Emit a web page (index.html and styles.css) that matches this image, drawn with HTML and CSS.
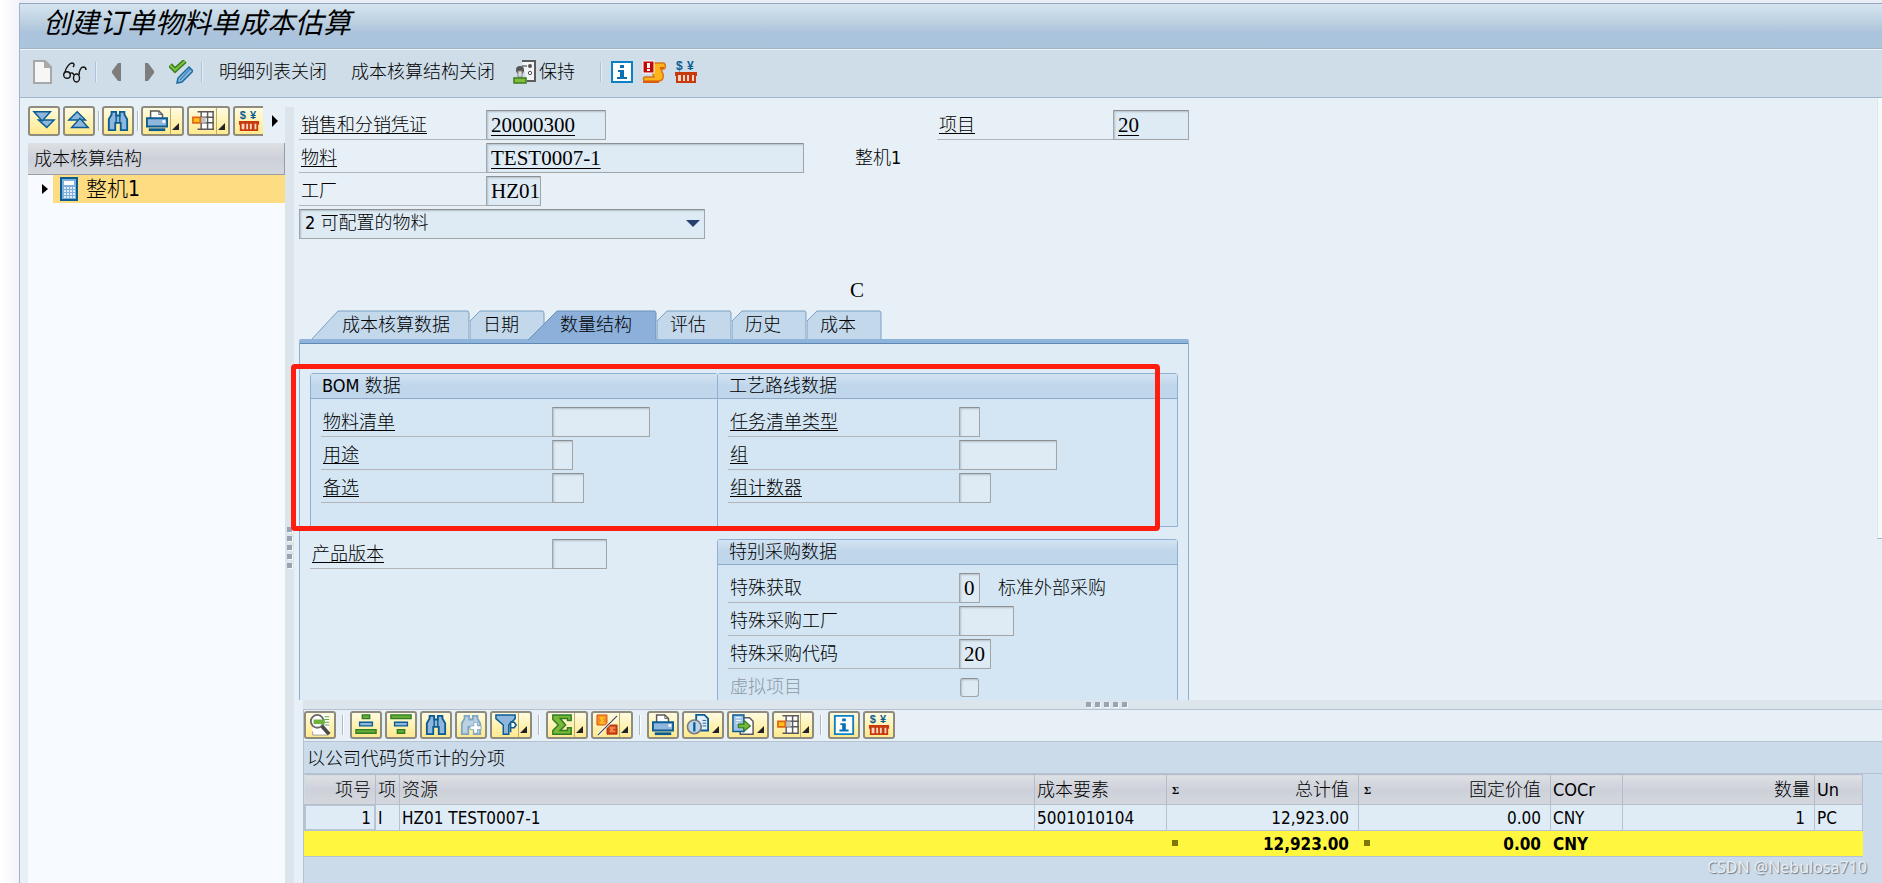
FILE: index.html
```html
<!DOCTYPE html>
<html lang="zh-CN">
<head>
    <meta charset="UTF-8">
    <meta name="viewport" content="width=device-width, initial-scale=1.0">
    <title>创建订单物料单成本估算</title>
    <link rel="stylesheet" href="styles.css">
</head>
<body>
<!-- 图标 -->
<svg class="icon-defs" aria-hidden="true">
    <symbol id="i-doc" viewBox="0 0 24 24"><path d="M3 1h11l6 6v16H3z" fill="#f6f6f6" stroke="#a8a8a8" stroke-width="2"/><path d="M13 1l7 7h-7z" fill="#a8a8a8"/></symbol>
    <symbol id="i-glasses" viewBox="0 0 24 24"><g fill="none" stroke="#111" stroke-width="1.4"><circle cx="4" cy="15" r="3.3"/><ellipse cx="13.500" cy="18" rx="3" ry="4"/><path d="M7 14c1-2 3-1 4 1M2 12C3 7 7 3 9 3s3 2 1 4M16 15c0-4 2-8 4-8s3 1 3 3"/></g></symbol>
    <symbol id="i-prev" viewBox="0 0 24 24"><path d="M16 3v18h-3L7 13v-2l6-8z" fill="#7d7d7d"/></symbol>
    <symbol id="i-next" viewBox="0 0 24 24"><path d="M8 3v18h3l6-8v-2l-6-8z" fill="#7d7d7d"/></symbol>
    <symbol id="i-check" viewBox="0 0 24 24"><path d="M1 5l5 5 10-9" fill="none" stroke="#3c7d1f" stroke-width="5"/><path d="M1 5l5 5 10-9" fill="none" stroke="#7cc043" stroke-width="2"/><path d="M8 23l1-5L20 7l4 4-11 11z" fill="#86b6df" stroke="#1d6a9c" stroke-width="1.500"/><path d="M11 20L21 9" stroke="#1d6a9c"/></symbol>
    <symbol id="i-hold" viewBox="0 0 24 24"><path d="M9 1h13v20h-8" fill="#f4f4f6" stroke="#5c5c5c" stroke-width="2"/><path d="M9 6h5" stroke="#333"/><circle cx="17" cy="6" r="2" fill="#555"/><circle cx="17" cy="13" r="1.700" fill="none" stroke="#555"/><circle cx="7" cy="10" r="4" fill="#555"/><path d="M5 11h4v6H5z" fill="#ddd" stroke="#888"/><path d="M1 18h12v5H1z" fill="#83bd3c" stroke="#3d7d1f" stroke-width="1.500"/></symbol>
    <symbol id="i-info" viewBox="0 0 24 24"><path d="M2 2h20v20H2z" fill="#fff" stroke="#0b80c3" stroke-width="2"/><path d="M10 5h4v3h-4zM8 10h6v7h3v2H7v-2h3v-5H8z" fill="#0b70b3"/></symbol>
    <symbol id="i-scroll" viewBox="0 0 24 24"><path d="M8 3h13c3 0 3 5 1 6h-3l2 5c1 4-1 7-4 7H3c-2 0-2-4 0-4h9L9 9z" fill="#fbb41a" stroke="#d9741a" stroke-width="1.500"/><path d="M1 22h16M18 8h4" stroke="#e05a10" stroke-width="2"/><path d="M1 1h11v12H1z" fill="#c40808" stroke="#fff"/><path d="M5 3h3v5H5zM5 9h3v2H5z" fill="#fff"/></symbol>
    <symbol id="i-down" viewBox="0 0 24 24"><g fill="#8fb6dc" stroke="#0a5c92" stroke-width="1.600"><path d="M6 11h17l-8 8z"/><path d="M1 2h18l-9 10z"/></g></symbol>
    <symbol id="i-up" viewBox="0 0 24 24"><g fill="#8fb6dc" stroke="#0a5c92" stroke-width="1.600"><path d="M1 11h18L10 2z"/><path d="M4 19h18l-9-10z"/></g></symbol>
    <symbol id="i-find" viewBox="0 0 24 24"><path d="M2 22V10l3-5V2h5v4h4V2h5v3l3 5v12h-7v-8h-6v8z" fill="#8fb6dc" stroke="#0a5c92" stroke-width="2"/><path d="M10 6v8M14 6v8" stroke="#0a5c92" stroke-width="1.500"/></symbol>
    <symbol id="i-print" viewBox="0 0 24 24"><path d="M5 10V1h9l4 4v5" fill="#fff" stroke="#5a5a5a" stroke-width="1.600"/><path d="M14 1v4h4" fill="none" stroke="#5a5a5a"/><path d="M1 9h22v9H1z" fill="#8fb6dc" stroke="#0a5c92" stroke-width="2"/><path d="M18 11h3v3h-3z" fill="#fff"/><path d="M3 20h18v3H3z" fill="#0a5c92"/></symbol>
    <symbol id="i-layout" viewBox="0 0 24 24"><path d="M9 2h14v19H9z" fill="#fff"/><path d="M6 2h18M9 8h15M9 14h15M6 21h18M10 2v19M17 2v19M23 2v19" fill="none" stroke="#5a5a5a" stroke-width="1.600"/><path d="M1 8h8v6H1z" fill="#fbc21a" stroke="#e0641a" stroke-width="1.800"/><path d="M10 8h5v6h-5z" fill="#c4c4c4"/></symbol>
    <symbol id="i-calc" viewBox="0 0 24 24"><path d="M4 1h16v22H4z" fill="#7fb0dc" stroke="#0a5c92" stroke-width="2"/><path d="M7 4h10v4H7z" fill="#fff"/><path d="M7 11h11M7 14h11M7 17h11M7 20h11" stroke="#fff" stroke-width="1.500" stroke-dasharray="2 1"/></symbol>
    <symbol id="i-detail" viewBox="0 0 24 24"><path d="M4 1h18v22H4z" fill="#fff"/><path d="M17 3h5M17 6h5M17 9h5M17 12h5" stroke="#4fa02d"/><path d="M4 19v4h16" stroke="#999" fill="none"/><circle cx="9" cy="8" r="7" fill="#fff" stroke="#6a6a6a" stroke-width="2"/><path d="M5 6h12v5H5z" fill="#6cb33c"/><path d="M14 13l8 9" stroke="#4a4a4a" stroke-width="4"/></symbol>
    <symbol id="i-asc" viewBox="0 0 24 24"><g stroke-width="1.500"><path d="M8 1h8v4H8z" fill="#65ad33" stroke="#2f7d2a"/><path d="M5 9h14v4H5z" fill="#8fb6dc" stroke="#0a5c92"/><path d="M1 17h22v4H1z" fill="#65ad33" stroke="#2f7d2a"/></g></symbol>
    <symbol id="i-desc" viewBox="0 0 24 24"><g stroke-width="1.500"><path d="M1 1h22v4H1z" fill="#65ad33" stroke="#2f7d2a"/><path d="M5 9h14v4H5z" fill="#8fb6dc" stroke="#0a5c92"/><path d="M8 17h8v4H8z" fill="#65ad33" stroke="#2f7d2a"/></g></symbol>
    <symbol id="i-findnext" viewBox="0 0 24 24"><path d="M2 22V10l3-5V2h5v4h4V2h5v3l3 5v12h-7v-8h-6v8z" fill="#bcd2e4" stroke="#7fa6c4" stroke-width="2"/><path d="M15 9h4v4h4v4h-4v4h-4v-4h-4v-4h4z" fill="#fff" stroke="#7fa6c4"/></symbol>
    <symbol id="i-filter" viewBox="0 0 24 24"><path d="M1 1h21v4l-7 7v10H9V12L1 5z" fill="#8fb6dc" stroke="#0a5c92" stroke-width="1.600"/><path d="M17 20V9h4l2 3-2 3h-4" fill="#fff" stroke="#0a5c92" stroke-width="1.800"/></symbol>
    <symbol id="i-sum" viewBox="0 0 24 24"><path d="M2 1h20v6h-4V5H10l6 7-6 6h8v-3h4v7H2v-4l6-6-6-6z" fill="#78b834" stroke="#2f7d2a" stroke-width="1.600"/></symbol>
    <symbol id="i-subtotal" viewBox="0 0 24 24"><path d="M1 1h11v11H1z" fill="#f58a2c" stroke="#d9541a"/><path d="M12 12h11v10H12z" fill="#d4421a" stroke="#a82c10"/><path d="M4 3h6v2H7l2 2-2 2h3v2H4V9l2-2-2-2z" fill="#fbc21a"/><path d="M15 14h6v2h-3l1 1-1 1h3v2h-6v-2l1-1-1-1z" fill="#f08a4a"/><path d="M2 23L23 2" stroke="#fff" stroke-width="3"/><path d="M2 23L23 2" stroke="#444" stroke-width="1.200"/></symbol>
    <symbol id="i-preview" viewBox="0 0 24 24"><path d="M10 1h9l4 4v13H10z" fill="#e6f0fa" stroke="#0a5c92" stroke-width="2"/><path d="M17 7h4M17 10h4M17 13h4" stroke="#0a5c92"/><circle cx="8" cy="14" r="7.500" fill="#bcd4ec" stroke="#7a7a7a" stroke-width="1.800"/><path d="M8 9v10" stroke="#0a5c92" stroke-width="2.500"/></symbol>
    <symbol id="i-export" viewBox="0 0 24 24"><path d="M9 4h10l4 4v14H9z" fill="#fff" stroke="#5a5a5a" stroke-width="1.600"/><path d="M1 1h12v18H1z" fill="#9fc2e4" stroke="#0a5c92" stroke-width="1.600"/><path d="M4 4h6M4 7h6M4 10h4" stroke="#fff"/><path d="M7 11h6V7l7 6-7 6v-4H7z" fill="#78b834" stroke="#2f7d2a" stroke-width="1.300"/></symbol>
</svg>

<div class="window">
    <h1 class="title-bar">创建订单物料单成本估算</h1>

    <div class="app-bar">
        <button class="tool" title="新建"><svg><use href="#i-doc"/></svg></button>
        <button class="tool" title="显示"><svg><use href="#i-glasses"/></svg></button>
        <span class="sep"></span>
        <button class="tool" title="上一个"><svg><use href="#i-prev"/></svg></button>
        <button class="tool" title="下一个"><svg><use href="#i-next"/></svg></button>
        <button class="tool" title="检查"><svg><use href="#i-check"/></svg></button>
        <span class="sep"></span>
        <button class="tool tool-text">明细列表关闭</button>
        <button class="tool tool-text">成本核算结构关闭</button>
        <button class="tool tool-hold"><svg><use href="#i-hold"/></svg>保持</button>
        <span class="sep"></span>
        <button class="tool" title="信息"><svg><use href="#i-info"/></svg></button>
        <button class="tool" title="日志"><svg><use href="#i-scroll"/></svg></button>
        <button class="tool" title="成本"><svg class="money" viewBox="0 0 24 24"><text x="2" y="10">$</text><text x="13" y="10">¥</text><path d="M1 12h22v4h-1v7H2v-7H1z"/><path class="beads" d="M4 15h3v6H4zM9 15h2v6H9zM13 15h2v6h-2zM18 15h2v6h-2z"/></svg></button>
    </div>

    <div class="main">
        <div class="side">
            <div class="side-tools">
                <button class="btn" title="展开"><svg><use href="#i-down"/></svg></button>
                <button class="btn" title="折叠"><svg><use href="#i-up"/></svg></button>
                <span class="bar"></span>
                <button class="btn" title="查找"><svg><use href="#i-find"/></svg></button>
                <span class="bar"></span>
                <button class="btn menu split" title="打印"><svg><use href="#i-print"/></svg></button>
                <button class="btn menu split" title="布局"><svg><use href="#i-layout"/></svg></button>
                <button class="btn cut" title="成本"><svg class="money" viewBox="0 0 24 24"><text x="2" y="10">$</text><text x="13" y="10">¥</text><path d="M1 12h22v4h-1v7H2v-7H1z"/><path class="beads" d="M4 15h3v6H4zM9 15h2v6H9zM13 15h2v6h-2zM18 15h2v6h-2z"/></svg></button>
                <span class="more"></span>
            </div>
            <div class="side-head">成本核算结构</div>
            <div class="tree">
                <div class="node">
                    <span class="node-arrow"></span>
                    <a href="#" class="node-link"><svg><use href="#i-calc"/></svg>整机1</a>
                </div>
            </div>
        </div>
        <div class="v-split"><i></i><i></i><i></i><i></i><i></i></div>

        <div class="work">
            <div class="upper">
                <div class="form">
                    <div class="rows head-rows">
                        <div class="row row-doc">
                            <div class="field"><label for="doc"><u>销售和分销凭证</u></label><input class="w-doc linked" id="doc" value="20000300" readonly></div>
                            <div class="field"><label for="item"><u>项目</u></label><input class="w-item linked" id="item" value="20" readonly></div>
                        </div>
                        <div class="row">
                            <div class="field"><label for="mat"><u>物料</u></label><input class="w-mat linked" id="mat" value="TEST0007-1" readonly></div>
                            <span class="mat-text">整机1</span>
                        </div>
                        <div class="row">
                            <div class="field"><label for="plant">工厂</label><input class="w-4" id="plant" value="HZ01" readonly></div>
                        </div>
                        <div class="select-box">
                            <select aria-label="物料类型"><option>2 可配置的物料</option></select>
                        </div>
                    </div>
                    <div class="status">C</div>

                    <div class="tabs">
                        <button class="tab tab-first"><svg viewBox="0 0 159 30"><path d="M0 30L27 1H157L158 3V30"/></svg>成本核算数据</button>
                        <button class="tab"><svg viewBox="0 0 75 30"><path d="M0 30V11L10 1H73L74 3V30"/></svg>日期</button>
                        <button class="tab tab-on"><svg viewBox="0 0 129 30"><path d="M0 30L29 1H127L128 3V30"/></svg>数量结构</button>
                        <button class="tab"><svg viewBox="0 0 75 30"><path d="M0 30V11L10 1H73L74 3V30"/></svg>评估</button>
                        <button class="tab"><svg viewBox="0 0 75 30"><path d="M0 30V11L10 1H73L74 3V30"/></svg>历史</button>
                        <button class="tab"><svg viewBox="0 0 75 30"><path d="M0 30V11L10 1H73L74 3V30"/></svg>成本</button>
                    </div>
                    <div class="panel">
                        <div class="panel-grid">
                            <section class="group group-bom">
                                <h2>BOM 数据</h2>
                                <div class="rows">
                                    <div class="field"><label for="bom"><u>物料清单</u></label><input class="w-8" id="bom" readonly></div>
                                    <div class="field"><label for="usage"><u>用途</u></label><input class="w-1" id="usage" readonly></div>
                                    <div class="field"><label for="alt"><u>备选</u></label><input class="w-2" id="alt" readonly></div>
                                </div>
                            </section>
                            <section class="group">
                                <h2>工艺路线数据</h2>
                                <div class="rows">
                                    <div class="field"><label for="tl"><u>任务清单类型</u></label><input class="w-1" id="tl" readonly></div>
                                    <div class="field"><label for="grp"><u>组</u></label><input class="w-8" id="grp" readonly></div>
                                    <div class="field"><label for="cnt"><u>组计数器</u></label><input class="w-2" id="cnt" readonly></div>
                                </div>
                            </section>
                            <div class="field version"><label for="ver"><u>产品版本</u></label><input class="w-4" id="ver" readonly></div>
                            <section class="group">
                                <h2>特别采购数据</h2>
                                <div class="rows">
                                    <div class="field"><label for="sp">特殊获取</label><input class="w-1" id="sp" value="0" readonly><span class="note">标准外部采购</span></div>
                                    <div class="field"><label for="spw">特殊采购工厂</label><input class="w-4" id="spw" readonly></div>
                                    <div class="field"><label for="spk">特殊采购代码</label><input class="w-2" id="spk" value="20" readonly></div>
                                    <div class="field off"><label for="ph">虚拟项目</label><input type="checkbox" id="ph" disabled></div>
                                </div>
                            </section>
                        </div>
                        <div class="mark"></div>
                    </div>
                </div>
                <div class="scroll-edge"></div>
            </div>

            <div class="h-split"><i></i><i></i><i></i><i></i><i></i></div>

            <div class="list">
                <div class="list-tools">
                    <button class="btn" title="明细"><svg><use href="#i-detail"/></svg></button>
                    <span class="bar"></span>
                    <button class="btn" title="升序"><svg><use href="#i-asc"/></svg></button>
                    <button class="btn" title="降序"><svg><use href="#i-desc"/></svg></button>
                    <button class="btn" title="查找"><svg><use href="#i-find"/></svg></button>
                    <button class="btn" title="查找下一个"><svg><use href="#i-findnext"/></svg></button>
                    <button class="btn menu split" title="过滤"><svg><use href="#i-filter"/></svg></button>
                    <span class="bar"></span>
                    <button class="btn menu split" title="总计"><svg><use href="#i-sum"/></svg></button>
                    <button class="btn menu split" title="小计"><svg><use href="#i-subtotal"/></svg></button>
                    <span class="bar"></span>
                    <button class="btn" title="打印"><svg><use href="#i-print"/></svg></button>
                    <button class="btn menu" title="视图"><svg><use href="#i-preview"/></svg></button>
                    <button class="btn menu" title="导出"><svg><use href="#i-export"/></svg></button>
                    <button class="btn menu split" title="布局"><svg><use href="#i-layout"/></svg></button>
                    <span class="bar"></span>
                    <button class="btn" title="信息"><svg><use href="#i-info"/></svg></button>
                    <button class="btn" title="成本"><svg class="money" viewBox="0 0 24 24"><text x="2" y="10">$</text><text x="13" y="10">¥</text><path d="M1 12h22v4h-1v7H2v-7H1z"/><path class="beads" d="M4 15h3v6H4zM9 15h2v6H9zM13 15h2v6h-2zM18 15h2v6h-2z"/></svg></button>
                </div>
                <div class="list-title">以公司代码货币计的分项</div>
                <table class="items">
                    <colgroup>
                        <col class="c-no"><col class="c-cat"><col><col class="c-elem"><col class="c-sum"><col class="c-sum"><col class="c-cur"><col class="c-sum"><col class="c-un">
                    </colgroup>
                    <thead>
                        <tr>
                            <th class="num tight">项号</th><th>项</th><th>资源</th><th>成本要素</th>
                            <th class="num"><b class="sigma">Σ</b>总计值</th><th class="num"><b class="sigma">Σ</b>固定价值</th>
                            <th>COCr</th><th class="num tight">数量</th><th>Un</th>
                        </tr>
                    </thead>
                    <tbody>
                        <tr>
                            <td class="num tight focus">1</td><td>I</td><td>HZ01 TEST0007-1</td><td>5001010104</td>
                            <td class="num">12,923.00</td><td class="num">0.00</td><td>CNY</td><td class="num">1</td><td>PC</td>
                        </tr>
                        <tr class="total">
                            <td></td><td></td><td></td><td></td>
                            <td class="num"><b class="dot"></b>12,923.00</td><td class="num"><b class="dot"></b>0.00</td><td>CNY</td><td></td><td></td>
                        </tr>
                    </tbody>
                </table>
            </div>
        </div>
    </div>
    <div class="watermark">CSDN @Nebulosa710</div>
</div>
</body>
</html>
```

FILE: styles.css
```css
* {
    box-sizing: border-box;
}
body {
    margin: 0;
    padding: 3px 0 0 19px;
    height: 100vh;
    overflow: hidden;
    background: linear-gradient(90deg, #fff, #f3f4fa 19px, #e9edf6 20px);
    font: 300 18px/24px "DejaVu Sans Condensed", "Noto Sans CJK SC", sans-serif;
    color: #000;
}
button, input, select {
    font: inherit;
    color: inherit;
    margin: 0;
    padding: 0;
    border-radius: 0;
}
h1, h2 {
    margin: 0;
    font-weight: 300;
}
.icon-defs {
    position: absolute;
    width: 0;
    height: 0;
}
.money {
    font: 700 12px "Liberation Sans", sans-serif;
    fill: #0a5c92;
}
.money path {
    fill: #c83a0c;
}
.money .beads {
    fill: #f6d6c4;
}
.window {
    position: relative;
    height: 100%;
    display: flex;
    flex-direction: column;
    border-left: 1px solid #a3b4ca;
    background: #e8f0f7;
}

/* 标题和应用工具栏 */
.title-bar {
    height: 46px;
    padding-left: 23px;
    border-top: 1px solid #93a5c0;
    border-bottom: 1px solid #9fb4c8;
    background: linear-gradient(#d6e4f0, #bdd1e1 40%, #abc3dc 65%, #abc5dd);
    font-size: 28px;
    line-height: 40px;
    font-style: italic;
    font-weight: 400;
}
.app-bar {
    display: flex;
    align-items: center;
    height: 49px;
    padding: 0 7px 4px;
    border-top: 1px solid #eef4fa;
    border-bottom: 1px solid #a3b7cc;
    background: #cfdde8;
}
.tool {
    display: flex;
    align-items: center;
    height: 28px;
    padding: 0 4px;
    border: 0;
    background: none;
}
.tool svg {
    width: 24px;
    height: 24px;
}
.tool-text {
    padding: 0 12px;
}
.tool-text + .tool-text {
    padding: 0 14px 0 12px;
}
.tool-hold {
    gap: 2px;
    padding-right: 21px;
}
.sep {
    width: 2px;
    height: 20px;
    margin: 0 4px;
    border-left: 1px solid #a9c3dc;
    border-right: 1px solid #e4edf5;
}

.main {
    flex: 1;
    min-height: 0;
    display: flex;
}

/* 左侧结构树 */
.side {
    width: 265px;
    padding: 8px 0 0 8px;
    display: flex;
    flex-direction: column;
}
.side-tools {
    display: flex;
    align-items: center;
    gap: 3px;
    height: 30px;
}
.btn {
    flex: none;
    position: relative;
    display: block;
    width: 32px;
    height: 30px;
    padding: 0 2px;
    border: 2px solid #8e8c7e;
    border-radius: 3px;
    background: linear-gradient(#fffbe2, #fff2b4 50%, #ffe98e);
}
.btn svg {
    display: block;
    width: 24px;
    height: 22px;
}
.menu {
    width: 43px;
}
.menu::after {
    content: "";
    position: absolute;
    right: 3px;
    bottom: 4px;
    border-left: 7px solid transparent;
    border-bottom: 7px solid #22222c;
}
.split::before {
    content: "";
    position: absolute;
    right: 11px;
    top: 0;
    bottom: 0;
    border-left: 1px solid #b9ad72;
}
.cut {
    border-right: 0;
    border-radius: 3px 0 0 3px;
    width: 30px;
}
.bar {
    width: 2px;
    height: 20px;
    border-left: 1px solid #b0b8c0;
    border-right: 1px solid #fff;
}
.side-tools .bar {
    margin-right: -1px;
}
.more {
    margin-left: 6px;
    border: 6px solid transparent;
    border-left-color: #000;
    border-right: 0;
}
.side-head {
    margin-top: 7px;
    height: 32px;
    padding-left: 6px;
    border-right: 1px solid #999ca4;
    border-bottom: 1px solid #999ca4;
    background: linear-gradient(#dde1e4, #cdd0d9 50%, #d3d8dd);
    line-height: 32px;
}
.tree {
    flex: 1;
    background: #f7faff;
}
.node {
    display: flex;
    align-items: center;
}
.node-arrow {
    width: 25px;
    height: 10px;
}
.node-arrow::before {
    content: "";
    display: block;
    width: 0;
    margin-left: 14px;
    border: 5px solid transparent;
    border-left: 6px solid #000;
    border-right: 0;
}
.node-link {
    flex: 1;
    display: flex;
    align-items: center;
    gap: 5px;
    height: 28px;
    padding-left: 4px;
    background: #fddc82;
    color: #000;
    font-size: 21px;
    text-decoration: none;
}
.node-link svg {
    width: 24px;
    height: 24px;
}
.v-split {
    width: 9px;
    margin-top: 9px;
    background: #dbe5eb;
    display: flex;
    flex-direction: column;
    align-items: center;
    justify-content: center;
    gap: 4px;
    padding-top: 104px;
}
.v-split i, .h-split i {
    width: 5px;
    height: 5px;
    background: #98a4b4;
    box-shadow: 1px 1px #f4f8fb;
}

/* 工作区 */
.work {
    flex: 1;
    min-width: 0;
    display: flex;
    flex-direction: column;
}
.upper {
    flex: 1;
    min-height: 0;
    display: flex;
}
.form {
    flex: 1;
    overflow: hidden;
    margin-left: -9px;
    padding: 12px 0 0 14px;
}
.scroll-edge {
    width: 5px;
    height: 441px;
    border-left: 1px solid #dde5ee;
    border-bottom: 1px solid #a9b4c0;
    background: #f5f8fb;
}
.rows {
    display: grid;
    gap: 3px;
}
.row {
    display: flex;
}
.row-doc {
    display: grid;
    grid-template-columns: 638px auto;
}
.field {
    display: flex;
    height: 30px;
}
.field label {
    width: 231px;
    padding: 3px 0 0 2px;
    border-bottom: 1px solid #b3b5b8;
}
.field u {
    text-decoration-thickness: 1px;
    text-underline-offset: 2px;
}
.head-rows .field label {
    width: 187px;
}
.row-doc .field + .field label {
    width: 176px;
}
.field input {
    height: 30px;
    padding: 0 0 0 4px;
    border: 1px solid #a2a5a8;
    border-radius: 1px;
    border-top-color: #8d9092;
    background: #deebf5;
    box-shadow: inset 1px 1px 2px #b4bfc8;
    font-family: "Liberation Serif", serif;
    font-size: 21px;
    font-weight: 400;
}
.field .linked {
    text-decoration: underline 1px;
    text-underline-offset: 3px;
}
.field .w-1 { width: 21px; }
.field .w-2 { width: 32px; }
.field .w-4 { width: 55px; }
.field .w-8 { width: 98px; }
.field .w-doc { width: 120px; }
.field .w-mat { width: 318px; }
.field .w-item { width: 76px; }
.mat-text {
    margin-left: 51px;
    padding-top: 3px;
}
.select-box {
    position: relative;
    width: 406px;
}
.select-box select {
    display: block;
    appearance: none;
    width: 100%;
    height: 30px;
    padding: 0 0 2px 5px;
    border: 1px solid #a2a5a8;
    border-top-color: #8d9092;
    background: #deebf5;
    box-shadow: inset 1px 1px 2px #b4bfc8;
}
.select-box::after {
    content: "";
    position: absolute;
    right: 5px;
    top: 11px;
    border: 7px solid transparent;
    border-top-color: #25406e;
    border-bottom: 0;
}
.status {
    margin-top: 36px;
    height: 35px;
    padding: 3px 0 0 551px;
    font-family: "Liberation Serif", serif;
    font-size: 21px;
    font-weight: 400;
}

/* 页签 */
.tabs {
    display: flex;
    padding-left: 12px;
}
.tab {
    position: relative;
    z-index: 0;
    width: 75px;
    height: 29px;
    padding-left: 13px;
    border: 0;
    background: none;
    text-align: left;
}
.tab svg {
    position: absolute;
    z-index: -1;
    left: 0;
    top: 0;
    width: 100%;
    height: 30px;
    fill: #c3d8eb;
    stroke: #7d9fc4;
}
.tab-first {
    width: 159px;
    padding-left: 31px;
}
.tab-on {
    z-index: 1;
    width: 129px;
    margin-left: -17px;
    padding-left: 32px;
}
.tab-on svg {
    fill: #8cb0da;
    stroke: #6a90bd;
}
.panel {
    position: relative;
    width: 890px;
    border: 1px solid #8fb0d2;
    border-top: 4px solid #8fb4dc;
    border-radius: 2px 2px 0 0;
    border-bottom: 0;
    background: #dfecf5;
    box-shadow: inset 0 1px #5f88b5;
}
.panel-grid {
    display: grid;
    grid-template-columns: 407px 461px;
    row-gap: 12px;
    align-items: start;
    padding: 30px 10px 0;
}
.group {
    border: 1px solid #8fb0d2;
    border-radius: 3px 3px 0 0;
    background: #d4e6f4;
}
.group-bom {
    margin-right: -1px;
}
.group h2 {
    height: 25px;
    padding-left: 11px;
    border-bottom: 1px solid #8fa9c8;
    background: linear-gradient(#d3e3f2, #c0d6ea 50%, #c0d6ea);
    font-size: 18px;
    line-height: 24px;
}
.group .rows {
    padding: 8px 10px 23px;
}
.version label {
    width: 242px;
}
.note {
    margin-left: 18px;
    padding-top: 3px;
}
.off label {
    border-color: transparent;
    color: #8c98a4;
}
.off input {
    appearance: none;
    width: 19px;
    height: 19px;
    margin: 6px 1px;
    padding: 0;
    border-radius: 3px;
}
.mark {
    position: absolute;
    left: -9px;
    top: 21px;
    width: 869px;
    height: 167px;
    border: 5px solid #ff1d10;
    border-radius: 4px;
}

.h-split {
    height: 9px;
    margin-left: 9px;
    background: #dbe5eb;
    display: flex;
    align-items: center;
    justify-content: center;
    gap: 4px;
    padding-left: 28px;
}

/* 分项列表 */
.list {
    margin-left: 9px;
    padding-bottom: 26px;
    border-left: 1px solid #b4c2d4;
    background: #cbdbea;
}
.list-tools {
    display: flex;
    align-items: center;
    gap: 3px;
    height: 33px;
    padding-bottom: 2px;
    border-top: 1px solid #b4c2d4;
    border-bottom: 1px solid #b4c2d4;
    background: #e8f0f7;
}
.list-tools .btn {
    height: 28px;
}
.list-tools .menu {
    width: 42px;
}
.list-tools .bar {
    margin: 0 3px;
}
.list-title {
    height: 32px;
    padding-left: 3px;
    border-bottom: 1px solid #b4c2d4;
    line-height: 34px;
}
.items {
    width: calc(100% - 19px);
    border-collapse: collapse;
    table-layout: fixed;
    font-size: 17px;
}
.c-no { width: 71px; }
.c-cat { width: 24px; }
.c-elem { width: 132px; }
.c-sum { width: 192px; }
.c-cur { width: 72px; }
.c-un { width: 48px; }
.items th {
    position: relative;
    height: 30px;
    padding: 0 2px;
    border: solid #b4bdcc;
    border-width: 1px 1px 1px 0;
    background: linear-gradient(#dde1e4, #cdd0d9 50%, #d3d8dd);
    font-size: 18px;
    font-weight: 300;
    text-align: left;
    white-space: nowrap;
}
.items td {
    position: relative;
    height: 26px;
    padding: 0 2px;
    border: 1px solid #b4c2d4;
    background: #dfecf5;
    line-height: 22px;
    white-space: nowrap;
}
.items .num {
    padding-right: 9px;
    text-align: right;
}
.items .tight {
    padding-right: 4px;
}
.items .focus {
    box-shadow: inset 0 0 0 1px #b9c4d4;
}
.items .total td {
    border-color: #fff73f;
    border-bottom-color: #b4c2d4;
    background: #fff73f;
    font-weight: 700;
}
.sigma {
    position: absolute;
    left: 5px;
    top: 3px;
    font: 700 11px/24px "Liberation Serif", serif;
}
.dot {
    position: absolute;
    left: 5px;
    top: 9px;
    width: 6px;
    height: 6px;
    background: #7d7806;
}
.watermark {
    position: absolute;
    right: 15px;
    bottom: 4px;
    color: #e9eef3;
    font-family: "Noto Sans", sans-serif;
    font-size: 16px;
    font-weight: 400;
    text-shadow: 1px 1px 1px #6d7782;
}
```
